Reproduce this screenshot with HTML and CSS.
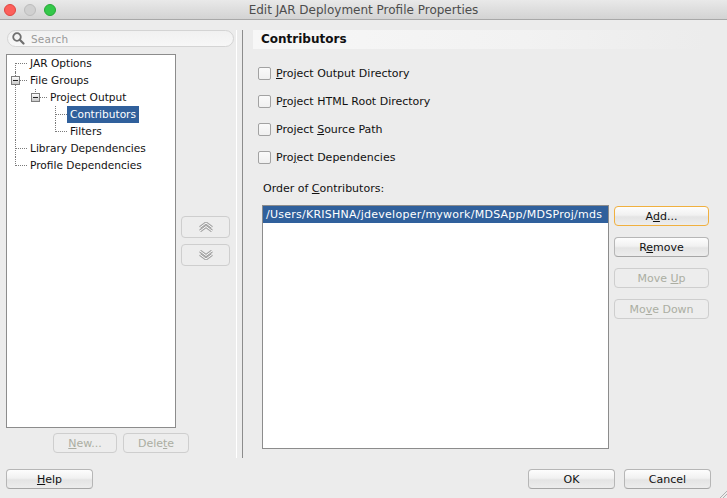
FILE: index.html
```html
<!DOCTYPE html>
<html lang="en">
<head>
    <meta charset="UTF-8">
    <title>Edit JAR Deployment Profile Properties</title>
    <link rel="stylesheet" href="styles.css">
</head>
<body>
<div class="window">
    <div class="titlebar">
        <div class="lights">
            <span class="light close"></span>
            <span class="light minimize"></span>
            <span class="light zoom"></span>
        </div>
        <div class="title">Edit JAR Deployment Profile Properties</div>
        <div></div>
    </div>

    <div class="main">
        <div class="nav">
            <div class="search">
                <svg class="search-icon" width="13" height="13" viewBox="0 0 13 13">
                    <circle cx="5" cy="5" r="3.8" fill="none" stroke="#6f6f6f" stroke-width="1.8"/>
                    <line x1="7.8" y1="7.8" x2="11.5" y2="11.5" stroke="#6f6f6f" stroke-width="2.2" stroke-linecap="round"/>
                </svg>
                <span class="placeholder">Search</span>
            </div>
            <div class="nav-body">
                <div class="tree-box">
                    <ul class="tree">
                        <li><span class="label">JAR Options</span></li>
                        <li><span class="toggle"></span><span class="label">File Groups</span>
                            <ul>
                                <li><span class="toggle"></span><span class="label">Project Output</span>
                                    <ul>
                                        <li><span class="label selected">Contributors</span></li>
                                        <li><span class="label">Filters</span></li>
                                    </ul>
                                </li>
                            </ul>
                        </li>
                        <li><span class="label">Library Dependencies</span></li>
                        <li><span class="label">Profile Dependencies</span></li>
                    </ul>
                </div>
                <div class="order-buttons">
                    <button class="btn arrow" disabled>
                        <svg width="16" height="10" viewBox="0 0 16 10">
                            <polyline points="2,5.5 8,1 14,5.5" fill="none" stroke="#a4a4a4" stroke-width="3" stroke-linejoin="round"/>
                            <polyline points="2,5.5 8,1 14,5.5" fill="none" stroke="#fff" stroke-width="1"/>
                            <polyline points="2,9 8,4.5 14,9" fill="none" stroke="#a4a4a4" stroke-width="3" stroke-linejoin="round"/>
                            <polyline points="2,9 8,4.5 14,9" fill="none" stroke="#fff" stroke-width="1"/>
                        </svg>
                    </button>
                    <button class="btn arrow" disabled>
                        <svg width="16" height="10" viewBox="0 0 16 10">
                            <polyline points="2,1 8,5.5 14,1" fill="none" stroke="#a4a4a4" stroke-width="3" stroke-linejoin="round"/>
                            <polyline points="2,1 8,5.5 14,1" fill="none" stroke="#fff" stroke-width="1"/>
                            <polyline points="2,4.5 8,9 14,4.5" fill="none" stroke="#a4a4a4" stroke-width="3" stroke-linejoin="round"/>
                            <polyline points="2,4.5 8,9 14,4.5" fill="none" stroke="#fff" stroke-width="1"/>
                        </svg>
                    </button>
                </div>
            </div>
            <div class="nav-actions">
                <button class="btn new" disabled><u>N</u>ew...</button>
                <button class="btn delete" disabled>Dele<u>t</u>e</button>
            </div>
        </div>

        <div class="splitter"></div>

        <div class="panel">
            <h2 class="panel-header">Contributors</h2>
            <div class="checks">
                <label class="check"><span class="box"></span><span><u>P</u>roject Output Directory</span></label>
                <label class="check"><span class="box"></span><span>P<u>r</u>oject HTML Root Directory</span></label>
                <label class="check"><span class="box"></span><span>Project <u>S</u>ource Path</span></label>
                <label class="check"><span class="box"></span><span>Pro<u>j</u>ect Dependencies</span></label>
            </div>
            <div class="order-label">Order of <u>C</u>ontributors:</div>
            <div class="order-row">
                <div class="list">
                    <div class="list-item selected">/Users/KRISHNA/jdeveloper/mywork/MDSApp/MDSProj/mds</div>
                </div>
                <div class="list-buttons">
                    <button class="btn focus">A<u>d</u>d...</button>
                    <button class="btn">R<u>e</u>move</button>
                    <button class="btn" disabled>Move <u>U</u>p</button>
                    <button class="btn" disabled>Mo<u>v</u>e Down</button>
                </div>
            </div>
        </div>
    </div>

    <div class="footer">
        <button class="btn wide"><u>H</u>elp</button>
        <button class="btn wide ok">OK</button>
        <button class="btn wide">Cancel</button>
    </div>

    <svg class="grip" width="8" height="8" viewBox="0 0 8 8">
        <line x1="1" y1="8" x2="8" y2="1" stroke="#b0b0b0"/>
        <line x1="4" y1="8" x2="8" y2="4" stroke="#b0b0b0"/>
    </svg>
</div>
</body>
</html>
```

FILE: styles.css
```css
* {
    box-sizing: border-box;
}
html, body {
    margin: 0;
}
body {
    width: 727px;
    height: 498px;
    overflow: hidden;
    background: #ececec;
    font-family: "DejaVu Sans", sans-serif;
    font-size: 11px;
    color: #111;
}
.window {
    position: relative;
    height: 498px;
}

/* title bar */
.titlebar {
    display: grid;
    grid-template-columns: 1fr auto 1fr;
    align-items: center;
    height: 20px;
    background: linear-gradient(#e9e9e9, #d3d3d3);
    border-bottom: 1px solid #a8a8a8;
}
.lights {
    display: flex;
    gap: 8px;
    padding-left: 4px;
}
.light {
    width: 12px;
    height: 12px;
    border-radius: 50%;
}
.close {
    background: #fc605b;
    border: 1px solid #e0443f;
}
.minimize {
    background: #d0d0d0;
    border: 1px solid #bcbcbc;
}
.zoom {
    background: #34c84a;
    border: 1px solid #25a835;
}
.title {
    font-size: 12px;
    color: #4d4d4d;
}

/* body */
.main {
    display: flex;
    height: 438px;
    padding: 10px 0 0 6px;
}
.nav {
    width: 230px;
    display: flex;
    flex-direction: column;
}
.search {
    display: flex;
    align-items: center;
    gap: 6px;
    height: 17px;
    margin: 0 2px 7px 1px;
    padding-left: 4px;
    border: 1px solid #d4d4d4;
    border-radius: 9px;
    background: linear-gradient(#f1f1f1, #f7f7f7);
}
.placeholder {
    color: #9a9a9a;
    font-size: 10.5px;
    letter-spacing: 0.2px;
}
.nav-body {
    display: flex;
    gap: 5px;
    height: 374px;
}
.tree-box {
    width: 170px;
    height: 374px;
    background: #fff;
    border: 1px solid #8c8c8c;
}
.order-buttons {
    width: 49px;
    display: flex;
    flex-direction: column;
    justify-content: center;
    gap: 6px;
}
.nav-actions {
    display: flex;
    justify-content: center;
    gap: 6px;
    margin-top: 5px;
}

/* tree */
.tree, .tree ul {
    list-style: none;
    margin: 0;
    padding: 0;
}
.tree li {
    position: relative;
    padding-left: 20px;
    line-height: 17px;
    font-size: 10.6px;
}
.tree li::before {
    content: "";
    position: absolute;
    left: 8px;
    top: 8px;
    width: 12px;
    border-top: 1px dotted #7a7a7a;
}
.tree li::after {
    content: "";
    position: absolute;
    left: 8px;
    top: 0;
    bottom: 0;
    border-left: 1px dotted #7a7a7a;
}
.tree > li:first-child::after {
    top: 8px;
}
.tree li:last-child::after {
    bottom: auto;
    height: 9px;
}
.label {
    display: inline-block;
    padding: 0 3px;
    height: 17px;
    color: #111;
}
.label.selected {
    background: #30609c;
    color: #fff;
}
.toggle {
    position: absolute;
    left: 4px;
    top: 4px;
    width: 9px;
    height: 9px;
    z-index: 1;
    border: 1px solid #7d7d7d;
    background: linear-gradient(#fdfdfd, #c9c9c9);
}
.toggle::after {
    content: "";
    position: absolute;
    left: 1px;
    right: 1px;
    top: 3px;
    border-top: 1px solid #222;
}

/* splitter */
.splitter {
    width: 7px;
    height: 428px;
    border-left: 1px solid #fff;
    border-right: 1px solid #8c8c8c;
}

/* right panel */
.panel {
    flex: 1;
    padding-left: 10px;
}
.panel-header {
    margin: 0 22px 0 0;
    height: 19px;
    padding-left: 8px;
    font-size: 12px;
    font-weight: bold;
    line-height: 19px;
    color: #111;
    background: linear-gradient(to right, #f7f7f7, #f2f2f2 60%, #ececec);
}
.checks {
    margin-top: 10px;
    padding-left: 5px;
}
.check {
    display: flex;
    align-items: center;
    gap: 5px;
    height: 28px;
}
.box {
    width: 13px;
    height: 13px;
    border: 1px solid #a2a2a2;
    border-radius: 2px;
    background: linear-gradient(#fafafa, #f0f0f0);
}
.order-label {
    margin-top: 9px;
    padding-left: 10px;
    line-height: 17px;
}
.order-row {
    display: flex;
    gap: 5px;
    margin-top: 8px;
    padding-left: 9px;
}
.list {
    width: 347px;
    height: 244px;
    background: #fff;
    border: 1px solid #8c8c8c;
}
.list-item {
    height: 17px;
    line-height: 17px;
    padding-left: 3px;
    letter-spacing: 0.25px;
    white-space: nowrap;
}
.list-item.selected {
    background: #30609c;
    color: #fff;
}
.list-buttons {
    display: flex;
    flex-direction: column;
    gap: 11px;
    padding-top: 1px;
}
.list-buttons .btn {
    width: 95px;
}

/* buttons */
.btn {
    height: 20px;
    padding: 0;
    font-family: inherit;
    font-size: 11px;
    color: #111;
    border: 1px solid #b6b6b6;
    border-bottom-color: #a6a6a6;
    border-radius: 4px;
    background: linear-gradient(#fdfdfd, #f1f1f1 45%, #e4e4e4 55%, #ededed);
}
.btn:disabled {
    color: #abada2;
    border: 1px solid #cecece;
    background: #ededed;
}
.btn.focus {
    border: 1px solid #f0b03f;
}
.btn.arrow {
    height: 22px;
    display: flex;
    align-items: center;
    justify-content: center;
}
.btn.new {
    width: 64px;
}
.btn.delete {
    width: 66px;
}
.footer {
    display: flex;
    gap: 9px;
    padding: 11px 16px 0 6px;
}
.btn.wide {
    width: 87px;
}
.btn.ok {
    margin-left: auto;
}
.grip {
    position: absolute;
    right: 0;
    bottom: 0;
}
```
